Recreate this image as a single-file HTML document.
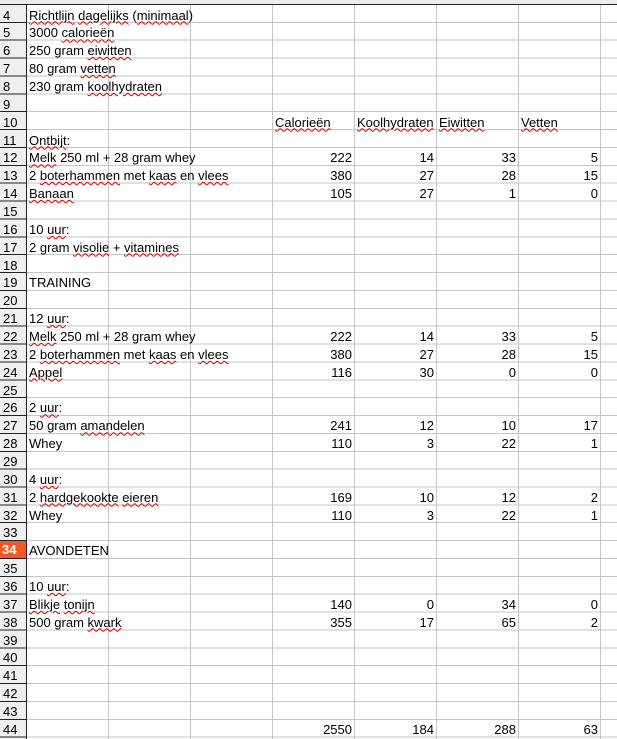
<!DOCTYPE html>
<html><head><meta charset="utf-8"><style>
body{margin:0;width:617px;height:739px;overflow:hidden;background:#fff;font-family:"Liberation Sans",Arial,sans-serif;font-size:13px;color:#000;position:relative}
.top{position:absolute;left:0;top:0;width:617px;height:5px;background:#ececec;border-bottom:1px solid #222;box-sizing:border-box}
.grid{position:absolute;left:0;top:5px;width:617px;height:734px;background:repeating-linear-gradient(to bottom,transparent 0 16.87px,#c6c6c6 16.87px 17.87px)}
.v{position:absolute;top:0;bottom:0;width:1px;background:#c6c6c6}
.hd{position:absolute;left:0;top:5px;width:26px;height:734px;background:repeating-linear-gradient(to bottom,#efefef 0 16.87px,#222 16.87px 17.87px);border-right:1px solid #222}
.rows{position:absolute;left:0;top:6.5px;width:617px}
.r{height:17.87px;position:relative;line-height:17px;white-space:nowrap}
.r>.n{position:absolute;left:3px;top:0}
.r>.a{position:absolute;left:29px;top:0}
.r>i{font-style:normal;position:absolute;top:0;text-align:right;width:80px}
.d{left:272px}.e{left:354px}.f{left:436px}.g{left:518px}
.r>b{font-weight:normal;position:absolute;top:0}
u{text-decoration:underline wavy #d00;text-decoration-thickness:1px;text-underline-offset:1px}
.sel{position:absolute;left:0;top:-1.5px;width:26px;height:16.87px;line-height:18px;background:#f05a22;color:#fff;font-weight:bold}
</style></head><body>
<div class="top"></div>
<div class="grid">
<div class="v" style="left:108px"></div><div class="v" style="left:190px"></div><div class="v" style="left:272px"></div><div class="v" style="left:354px"></div><div class="v" style="left:436px"></div><div class="v" style="left:518px"></div><div class="v" style="left:600px"></div>
</div>
<div class="hd"></div>
<div class="rows">
<div class="r"><span class="n">4</span><span class="a"><u>Richtlijn</u> <u>dagelijks</u> (<u>minimaal</u>)</span></div>
<div class="r"><span class="n">5</span><span class="a">3000 <u>calorieën</u></span></div>
<div class="r"><span class="n">6</span><span class="a">250 gram <u>eiwitten</u></span></div>
<div class="r"><span class="n">7</span><span class="a">80 gram <u>vetten</u></span></div>
<div class="r"><span class="n">8</span><span class="a">230 gram <u>koolhydraten</u></span></div>
<div class="r"><span class="n">9</span></div>
<div class="r"><span class="n">10</span><b style="left:275px"><u>Calorieën</u></b><b style="left:357px"><u>Koolhydraten</u></b><b style="left:439px"><u>Eiwitten</u></b><b style="left:521px"><u>Vetten</u></b></div>
<div class="r"><span class="n">11</span><span class="a"><u>Ontbijt</u>:</span></div>
<div class="r"><span class="n">12</span><span class="a"><u>Melk</u> 250 ml + 28 gram whey</span><i class="d">222</i><i class="e">14</i><i class="f">33</i><i class="g">5</i></div>
<div class="r"><span class="n">13</span><span class="a">2 <u>boterhammen</u> met <u>kaas</u> en <u>vlees</u></span><i class="d">380</i><i class="e">27</i><i class="f">28</i><i class="g">15</i></div>
<div class="r"><span class="n">14</span><span class="a"><u>Banaan</u></span><i class="d">105</i><i class="e">27</i><i class="f">1</i><i class="g">0</i></div>
<div class="r"><span class="n">15</span></div>
<div class="r"><span class="n">16</span><span class="a">10 <u>uur</u>:</span></div>
<div class="r"><span class="n">17</span><span class="a">2 gram <u>visolie</u> + <u>vitamines</u></span></div>
<div class="r"><span class="n">18</span></div>
<div class="r"><span class="n">19</span><span class="a">TRAINING</span></div>
<div class="r"><span class="n">20</span></div>
<div class="r"><span class="n">21</span><span class="a">12 <u>uur</u>:</span></div>
<div class="r"><span class="n">22</span><span class="a"><u>Melk</u> 250 ml + 28 gram whey</span><i class="d">222</i><i class="e">14</i><i class="f">33</i><i class="g">5</i></div>
<div class="r"><span class="n">23</span><span class="a">2 <u>boterhammen</u> met <u>kaas</u> en <u>vlees</u></span><i class="d">380</i><i class="e">27</i><i class="f">28</i><i class="g">15</i></div>
<div class="r"><span class="n">24</span><span class="a"><u>Appel</u></span><i class="d">116</i><i class="e">30</i><i class="f">0</i><i class="g">0</i></div>
<div class="r"><span class="n">25</span></div>
<div class="r"><span class="n">26</span><span class="a">2 <u>uur</u>:</span></div>
<div class="r"><span class="n">27</span><span class="a">50 gram <u>amandelen</u></span><i class="d">241</i><i class="e">12</i><i class="f">10</i><i class="g">17</i></div>
<div class="r"><span class="n">28</span><span class="a">Whey</span><i class="d">110</i><i class="e">3</i><i class="f">22</i><i class="g">1</i></div>
<div class="r"><span class="n">29</span></div>
<div class="r"><span class="n">30</span><span class="a">4 <u>uur</u>:</span></div>
<div class="r"><span class="n">31</span><span class="a">2 <u>hardgekookte</u> <u>eieren</u></span><i class="d">169</i><i class="e">10</i><i class="f">12</i><i class="g">2</i></div>
<div class="r"><span class="n">32</span><span class="a">Whey</span><i class="d">110</i><i class="e">3</i><i class="f">22</i><i class="g">1</i></div>
<div class="r"><span class="n">33</span></div>
<div class="r"><span class="sel"><span style="position:absolute;left:2px">34</span></span><span class="a">AVONDETEN</span></div>
<div class="r"><span class="n">35</span></div>
<div class="r"><span class="n">36</span><span class="a">10 <u>uur</u>:</span></div>
<div class="r"><span class="n">37</span><span class="a"><u>Blikje</u> <u>tonijn</u></span><i class="d">140</i><i class="e">0</i><i class="f">34</i><i class="g">0</i></div>
<div class="r"><span class="n">38</span><span class="a">500 gram <u>kwark</u></span><i class="d">355</i><i class="e">17</i><i class="f">65</i><i class="g">2</i></div>
<div class="r"><span class="n">39</span></div>
<div class="r"><span class="n">40</span></div>
<div class="r"><span class="n">41</span></div>
<div class="r"><span class="n">42</span></div>
<div class="r"><span class="n">43</span></div>
<div class="r"><span class="n">44</span><i class="d">2550</i><i class="e">184</i><i class="f">288</i><i class="g">63</i></div>
</div>
</body></html>
